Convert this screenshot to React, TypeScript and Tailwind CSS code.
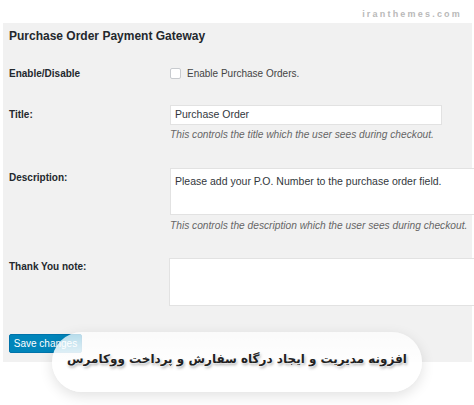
export default function App() {
  return (
    <div className="relative w-[474px] h-[405px] overflow-hidden bg-white font-['Liberation_Sans',Arial,sans-serif]">
      <div className="h-[23px] flex items-end justify-end pr-[12px] pb-[2px]">
        <span className="text-[9px] font-bold tracking-[2.2px] text-[#b9b9b9]">iranthemes.com</span>
      </div>

      <div className="ml-[3px] w-[469px] h-[339px] bg-[#f1f1f1] pl-[6px] pt-[4px] flex flex-col">
        <h2 className="text-[12px] leading-[18px] font-bold text-[#23282d]">Purchase Order Payment Gateway</h2>

        <div className="mt-[20px] flex items-center h-[16px]">
          <div className="w-[161px] shrink-0 text-[10px] font-bold text-[#23282d]">Enable/Disable</div>
          <label className="flex items-center gap-[6px] text-[10px] text-[#444]">
            <span className="w-[11px] h-[11px] shrink-0 rounded-[2px] border border-[#c8cbcf] bg-white" />
            Enable Purchase Orders.
          </label>
        </div>

        <div className="mt-[24px] flex">
          <div className="w-[161px] shrink-0 pt-[3px] text-[10px] leading-[14px] font-bold text-[#23282d]">Title:</div>
          <div className="flex flex-col">
            <div className="w-[272px] h-[20px] bg-white border border-[#e2e2e2] flex items-center px-[4px] text-[10.5px] text-[#32373c]">
              Purchase Order
            </div>
            <p className="mt-[3px] text-[10.2px] leading-[14px] italic text-[#666] whitespace-nowrap">
              This controls the title which the user sees during checkout.
            </p>
          </div>
        </div>

        <div className="mt-[26px] flex">
          <div className="w-[161px] shrink-0 pt-[3px] text-[10px] leading-[14px] font-bold text-[#23282d]">Description:</div>
          <div className="flex flex-col shrink-0">
            <div className="w-[310px] h-[47px] bg-white border border-[#e2e2e2] px-[4px] pt-[5px] text-[10.5px] leading-[14px] text-[#32373c]">
              Please add your P.O. Number to the purchase order field.
            </div>
            <p className="mt-[4px] text-[10.2px] leading-[14px] italic text-[#666] whitespace-nowrap">
              This controls the description which the user sees during checkout.
            </p>
          </div>
        </div>

        <div className="mt-[25px] flex">
          <div className="w-[160px] shrink-0 pt-[2px] text-[10px] leading-[14px] font-bold text-[#23282d]">Thank You note:</div>
          <div className="w-[310px] h-[48px] shrink-0 bg-white border border-[#e2e2e2]" />
        </div>

        <div className="mt-[24px]">
          <button className="h-[19px] w-[73px] rounded-[2px] bg-[#0085ba] border border-[#0073aa] text-white text-[10px] leading-[17px]">
            Save changes
          </button>
        </div>
      </div>

      <div className="absolute left-[52px] top-[332px] w-[370px] h-[60px] rounded-full bg-gradient-to-b from-white/70 via-white/95 to-white shadow-[0_4px_14px_rgba(0,0,0,0.12)] flex items-center justify-center">
        <span
          dir="rtl"
          className="-mt-[6px] whitespace-nowrap text-[12px] font-bold text-[#222] font-['DejaVu_Sans',sans-serif] [text-shadow:0_0_2px_#fff,0_0_2px_#fff,1px_2px_3px_rgba(0,0,0,0.35)]"
        >
          افزونه مدیریت و ایجاد درگاه سفارش و پرداخت  ووکامرس
        </span>
      </div>
    </div>
  )
}
